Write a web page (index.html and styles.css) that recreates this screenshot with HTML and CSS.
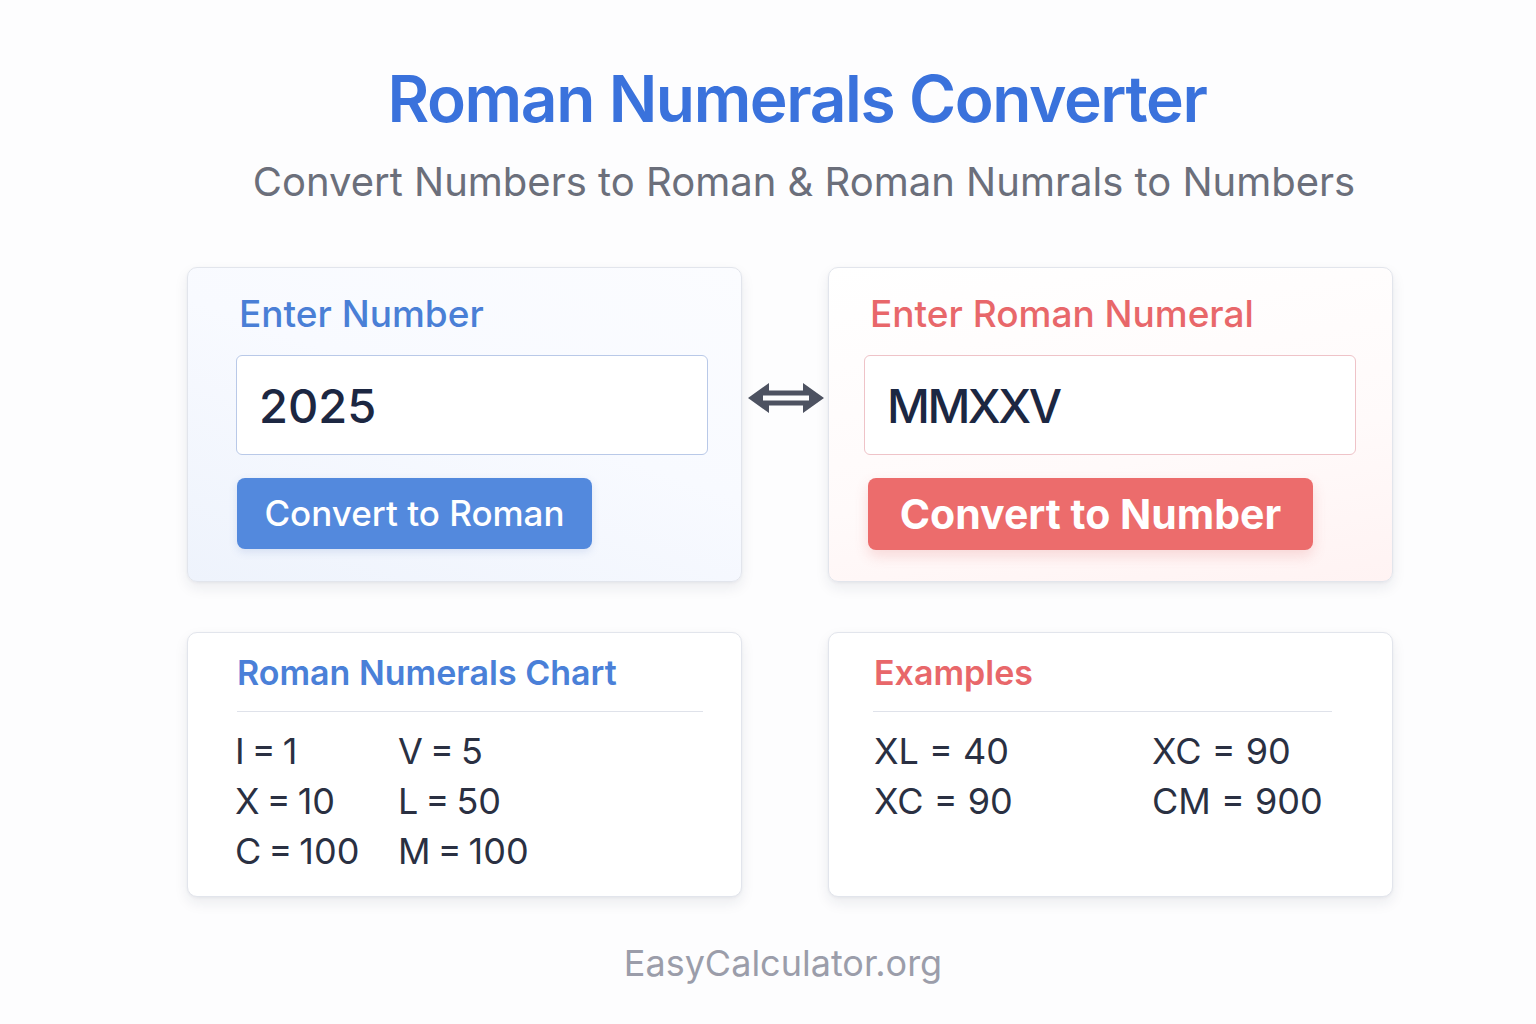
FILE: index.html
```html
<!DOCTYPE html>
<html lang="en">
<head>
<meta charset="utf-8">
<title>Roman Numerals Converter</title>
<link rel="stylesheet" href="styles.css">
</head>
<body>
<main class="page">
  <header class="hero">
    <h1 class="title">Roman Numerals Converter</h1>
    <p class="subtitle">Convert Numbers to Roman &amp; Roman Numrals to Numbers</p>
  </header>

  <section class="grid">
    <div class="card card-blue">
      <label class="label label-blue">Enter Number</label>
      <div class="field field-blue">2025</div>
      <button class="btn btn-blue">Convert to Roman</button>
    </div>

    <div class="swap">
      <svg width="76" height="32" viewBox="0 0 76 32" aria-hidden="true">
        <path fill="#4d5261" fill-rule="evenodd" d="M0 16 L21 1 L21 8.5 L55 8.5 L55 1 L76 16 L55 31 L55 23.5 L21 23.5 L21 31 Z M15 13.6 H61 V18.4 H15 Z"/>
      </svg>
    </div>

    <div class="card card-red">
      <label class="label label-red">Enter Roman Numeral</label>
      <div class="field field-red">MMXXV</div>
      <button class="btn btn-red">Convert to Number</button>
    </div>

    <div class="card info info-chart">
      <h2 class="info-title blue">Roman Numerals Chart</h2>
      <hr class="rule rule-chart">
      <div class="chart">
        <span>I = 1</span><span>V = 5</span>
        <span>X = 10</span><span>L = 50</span>
        <span>C = 100</span><span>M = 100</span>
      </div>
    </div>

    <div class="card info info-examples">
      <h2 class="info-title red">Examples</h2>
      <hr class="rule rule-examples">
      <div class="examples">
        <span>XL = 40</span><span>XC = 90</span>
        <span>XC = 90</span><span>CM = 900</span>
      </div>
    </div>
  </section>

  <footer class="footer">EasyCalculator.org</footer>
</main>
</body>
</html>
```

FILE: styles.css
```css
* { box-sizing: border-box; }

html, body {
  margin: 0;
  padding: 0;
  background: #fdfdfe;
}

body {
  font-family: Inter, "Noto Sans", "Liberation Sans", sans-serif;
  color: #2a3042;
  width: 1536px;
  height: 1024px;
  overflow: hidden;
}

.page {
  width: 1206px;
  margin-left: 187px;
  padding-top: 67px;
  display: flex;
  flex-direction: column;
}

.hero {
  display: flex;
  flex-direction: column;
  align-items: center;
}

.title {
  margin: 0;
  font-size: 64px;
  line-height: 1;
  font-weight: 600;
  color: #3a72dc;
  letter-spacing: -1.4px;
  transform: translateX(7px);
}

.subtitle {
  margin: 31px 0 0;
  font-size: 40px;
  line-height: 1;
  font-weight: 400;
  color: #6b6f7b;
  transform: translateX(14px);
}

.grid {
  margin-top: 65px;
  display: grid;
  grid-template-columns: 555px 86px 565px;
  grid-template-rows: 315px 265px;
  row-gap: 50px;
}

.card {
  border: 1px solid #e2e5ec;
  border-radius: 10px;
  box-shadow: 0 6px 14px rgba(30, 40, 70, 0.08), 0 1px 3px rgba(30, 40, 70, 0.05);
  background: #ffffff;
}

.card-blue {
  background: linear-gradient(20deg, #eef3fc 0%, #f8faff 55%, #fbfcff 100%);
  padding: 27px 0 0 48px;
  display: flex;
  flex-direction: column;
  align-items: flex-start;
}

.card-red {
  background: linear-gradient(170deg, #ffffff 0%, #fffafa 60%, #fff3f3 100%);
  padding: 27px 0 0 35px;
  display: flex;
  flex-direction: column;
  align-items: flex-start;
}

.label {
  font-size: 37px;
  line-height: 1;
  font-weight: 500;
  display: block;
}
.label-blue { color: #4a7fd6; margin-left: 3px; }
.label-red { color: #e8676a; margin-left: 6px; }

.field {
  margin-top: 23px;
  height: 100px;
  background: #ffffff;
  border-radius: 6px;
  display: flex;
  align-items: center;
  padding-left: 22px;
  font-size: 47px;
  font-weight: 500;
  color: #1c2742;
}
.field-blue {
  width: 472px;
  border: 1px solid #b9c9e8;
}
.field-red {
  width: 492px;
  border: 1px solid #efc3c8;
  letter-spacing: -2.5px;
}

.btn {
  margin-top: 23px;
  border: none;
  border-radius: 8px;
  color: #ffffff;
  font-family: inherit;
  line-height: 1;
  display: flex;
  align-items: center;
  justify-content: center;
  cursor: pointer;
}
.btn-blue {
  width: 355px;
  height: 71px;
  margin-left: 1px;
  background: #5389dd;
  font-size: 35px;
  font-weight: 500;
  box-shadow: 0 3px 8px rgba(60, 100, 180, 0.15);
}
.btn-red {
  width: 445px;
  height: 72px;
  margin-left: 4px;
  background: #ec6c6c;
  font-size: 41px;
  font-weight: 700;
  box-shadow: 0 6px 14px rgba(220, 90, 90, 0.2);
}

.swap {
  display: flex;
  justify-content: center;
  align-items: flex-start;
  padding-top: 115px;
}
.swap svg { display: block; margin-left: 2px; }

.info {
  grid-row: 2;
  padding-top: 23px;
}
.info-chart { grid-column: 1; padding-left: 49px; padding-right: 38px; }
.info-examples { grid-column: 3; padding-left: 44px; padding-right: 60px; }

.info-title {
  margin: 0;
  font-size: 34px;
  line-height: 1;
  font-weight: 600;
}
.info-title.blue { color: #4a80d8; }
.info-title.red { color: #e8676a; margin-left: 1px; }

.rule {
  margin: 21px 0 14px;
  border: none;
  height: 1px;
  background: #dfe2ea;
}

.chart {
  display: grid;
  grid-template-columns: 163px auto;
  font-size: 36px;
  line-height: 50px;
  color: #2a3042;
  margin-left: -2px;
  word-spacing: -3px;
}

.examples {
  display: grid;
  grid-template-columns: 278px auto;
  font-size: 36px;
  line-height: 50px;
  color: #2a3042;
  margin-left: 1px;
  word-spacing: 0;
}

.footer {
  margin-top: 48px;
  align-self: center;
  font-size: 36px;
  line-height: 1;
  color: #9b9daa;
  transform: translateX(-7px);
}
```
